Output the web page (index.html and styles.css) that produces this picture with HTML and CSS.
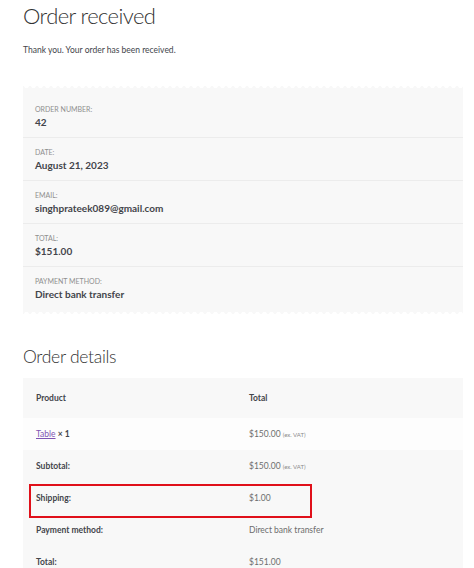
FILE: index.html
```html
<!DOCTYPE html>
<html>
<head>
<meta charset="utf-8">
<link rel="stylesheet" href="styles.css">
</head>
<body>
<main class="page">
  <h1 class="title">Order received</h1>
  <p class="thanks">Thank you. Your order has been received.</p>

  <ul class="overview">
    <li class="ov-row first">
      <span class="ov-label">Order number:</span>
      <strong class="ov-value">42</strong>
    </li>
    <li class="ov-row">
      <span class="ov-label">Date:</span>
      <strong class="ov-value">August 21, 2023</strong>
    </li>
    <li class="ov-row">
      <span class="ov-label">Email:</span>
      <strong class="ov-value">singhprateek089@gmail.com</strong>
    </li>
    <li class="ov-row">
      <span class="ov-label">Total:</span>
      <strong class="ov-value">$151.00</strong>
    </li>
    <li class="ov-row last">
      <span class="ov-label">Payment method:</span>
      <strong class="ov-value">Direct bank transfer</strong>
    </li>
  </ul>

  <h2 class="subtitle">Order details</h2>

  <div class="table-wrap">
    <table class="details">
      <colgroup><col class="c1"><col class="c2"></colgroup>
      <thead>
        <tr><th>Product</th><th>Total</th></tr>
      </thead>
      <tbody>
        <tr><td><a href="#" class="prod">Table</a> <strong class="qty">× 1</strong></td><td>$150.00 <small class="tax">(ex. VAT)</small></td></tr>
      </tbody>
      <tfoot>
        <tr><th>Subtotal:</th><td>$150.00 <small class="tax">(ex. VAT)</small></td></tr>
        <tr><th>Shipping:</th><td>$1.00</td></tr>
        <tr><th>Payment method:</th><td>Direct bank transfer</td></tr>
        <tr><th>Total:</th><td>$151.00</td></tr>
      </tfoot>
    </table>
    <div class="highlight"></div>
  </div>
</main>
</body>
</html>
```

FILE: styles.css
```css
html, body {
  margin: 0;
  padding: 0;
  background: #ffffff;
}

body {
  font-family: Lato, "Open Sans", sans-serif;
  color: #43454b;
}

.page {
  padding: 0 11px 0 23px;
}

.title {
  margin: 0;
  padding-top: 2px;
  font-size: 22px;
  line-height: 28px;
  font-weight: 300;
  letter-spacing: -0.6px;
  color: #333333;
}

.thanks {
  margin: 14px 0 0;
  font-size: 8.5px;
  line-height: 12px;
  color: #43454b;
}

.overview {
  list-style: none;
  margin: 30px 0 0;
  padding: 9px 0 0;
  background: #f8f8f8;
  position: relative;
}

.overview::before,
.overview::after {
  content: "";
  position: absolute;
  left: 0;
  right: 0;
  height: 4px;
  background-image: radial-gradient(circle at 50% 50%, #ffffff 2px, rgba(255,255,255,0) 2.6px);
  background-size: 7px 4px;
  background-repeat: repeat-x;
}

.overview::before {
  top: -2px;
}

.overview::after {
  bottom: -2px;
}

.ov-row {
  display: flex;
  flex-direction: column;
  padding: 9px 12px 7px;
  border-bottom: 1px solid #ececec;
  height: 26px;
}

.ov-row.last {
  border-bottom: none;
  padding-bottom: 12px;
}

.ov-label {
  font-size: 7px;
  line-height: 10px;
  text-transform: uppercase;
  color: #8f8f8f;
}

.ov-value {
  font-size: 10px;
  line-height: 16px;
  font-weight: 700;
  color: #43454b;
}

.subtitle {
  margin: 31px 0 0;
  font-size: 17.5px;
  line-height: 24px;
  font-weight: 300;
  letter-spacing: -0.3px;
  color: #333333;
}

.table-wrap {
  position: relative;
  margin-top: 9px;
}

.details {
  width: 100%;
  table-layout: fixed;
  border-collapse: collapse;
  font-size: 8.5px;
  color: #43454b;
}

.details .c1 {
  width: 213px;
}

.details th,
.details td {
  text-align: left;
  padding: 0 13px;
  height: 32px;
  vertical-align: middle;
}

.details thead th {
  height: 40px;
  background: #f8f8f8;
  font-weight: 700;
}

.details tbody td {
  background: #fdfdfd;
  color: #6d6d6d;
}

.details tfoot th,
.details tfoot td {
  background: #f8f8f8;
}

.details tfoot th {
  font-weight: 700;
}

.details tfoot td {
  font-weight: 400;
  color: #6d6d6d;
}

.prod {
  color: #7f54b3;
  text-decoration: underline;
}

.qty {
  font-weight: 700;
  color: #43454b;
}

.tax {
  font-size: 6px;
  color: #8a8a8a;
}

.highlight {
  position: absolute;
  left: 6px;
  top: 106px;
  width: 283px;
  height: 34px;
  border: 2px solid #e0101a;
  box-sizing: border-box;
}
```
